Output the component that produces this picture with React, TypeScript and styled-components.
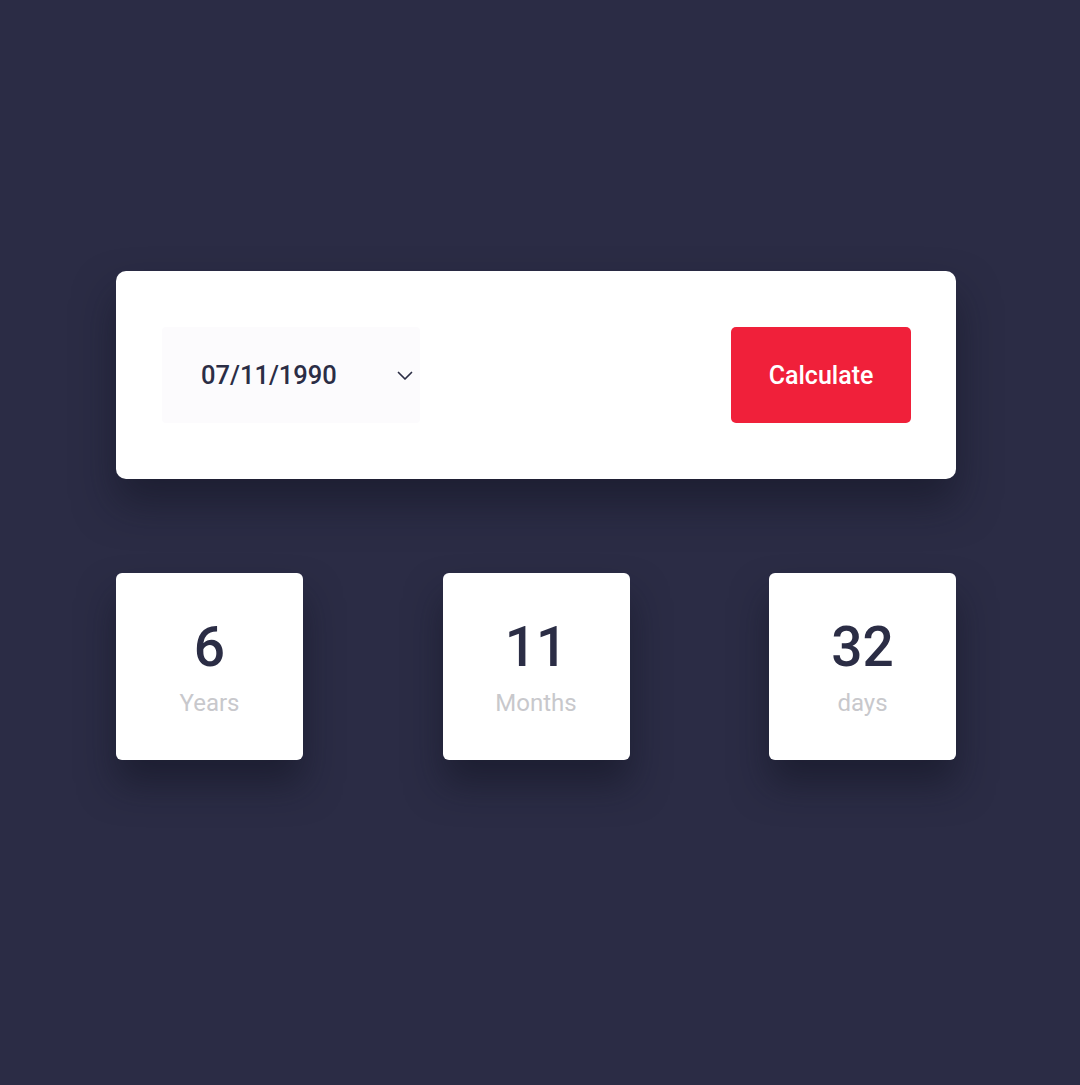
import styled, { createGlobalStyle } from "styled-components";

const GlobalStyle = createGlobalStyle`
    html, body {
        margin: 0;
        padding: 0;
        background-color: #2b2c45;
        font-family: Roboto, "Liberation Sans", sans-serif;
    }
`;

const Page = styled.div`
    min-height: 1085px;
    padding-top: 271px;
    box-sizing: border-box;
    display: flex;
    justify-content: center;
`;

const Wrapper = styled.div`
    width: 840px;
    margin-left: -8px;
    display: flex;
    flex-direction: column;
    gap: 94px;
`;

const Panel = styled.div`
    height: 208px;
    box-sizing: border-box;
    padding: 56px 45px 56px 46px;
    background-color: #ffffff;
    border-radius: 10px;
    box-shadow: 0 24px 40px rgba(16, 17, 32, 0.5);
    display: flex;
    align-items: center;
    justify-content: space-between;
`;

const DateField = styled.div`
    width: 258px;
    height: 96px;
    box-sizing: border-box;
    padding: 0 3px 0 39px;
    background-color: #fcfbfd;
    border-radius: 4px;
    display: flex;
    align-items: center;
    justify-content: space-between;
    color: #2b2d45;
    font-size: 25.5px;
    font-weight: 500;
    cursor: pointer;
`;

const Chevron = styled.svg`
    width: 24px;
    height: 24px;
`;

const CalcButton = styled.button`
    width: 180px;
    height: 96px;
    border: none;
    border-radius: 5px;
    background-color: #f0203a;
    color: #ffffff;
    font-family: Roboto, "Liberation Sans", sans-serif;
    font-size: 25px;
    font-weight: 500;
    cursor: pointer;
`;

const Results = styled.div`
    display: flex;
    justify-content: space-between;
`;

const Card = styled.div`
    width: 187px;
    height: 187px;
    background-color: #ffffff;
    border-radius: 6px;
    box-shadow: 0 24px 36px rgba(16, 17, 32, 0.5);
    display: flex;
    flex-direction: column;
    align-items: center;
    justify-content: center;
`;

const Value = styled.div`
    color: #2b2d45;
    font-size: 55px;
    font-weight: 500;
    line-height: 64px;
`;

const Label = styled.div`
    color: #c8c8cc;
    font-size: 24px;
    line-height: 30px;
    margin-top: 9px;
`;

const results = [
    { value: "6", label: "Years" },
    { value: "11", label: "Months" },
    { value: "32", label: "days" },
];

export default function App() {
    return (
        <>
            <GlobalStyle />
            <Page>
                <Wrapper>
                    <Panel>
                        <DateField>
                            07/11/1990
                            <Chevron viewBox="0 0 24 24" fill="none">
                                <path d="M5.5 9.5l6.5 6.5 6.5-6.5" stroke="#2b2d45" strokeWidth="1.7" strokeLinecap="round" strokeLinejoin="round" />
                            </Chevron>
                        </DateField>
                        <CalcButton>Calculate</CalcButton>
                    </Panel>
                    <Results>
                        {results.map((r) => (
                            <Card key={r.label}>
                                <Value>{r.value}</Value>
                                <Label>{r.label}</Label>
                            </Card>
                        ))}
                    </Results>
                </Wrapper>
            </Page>
        </>
    );
}
